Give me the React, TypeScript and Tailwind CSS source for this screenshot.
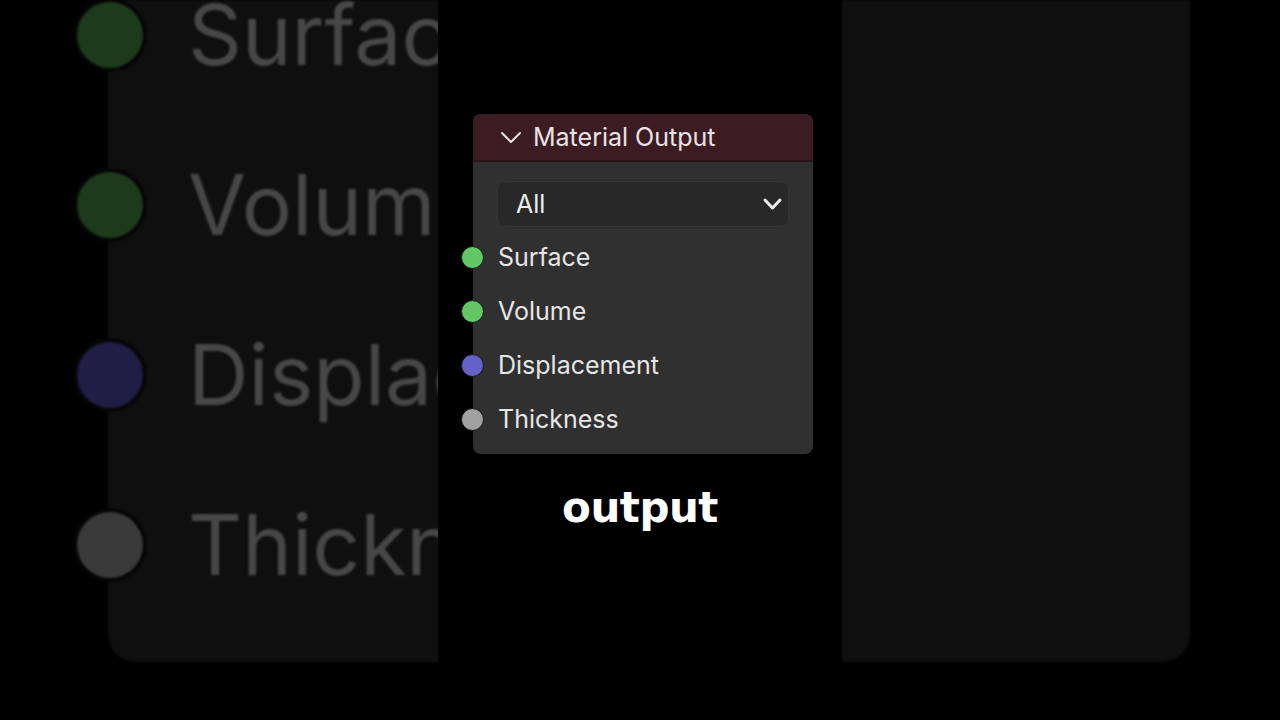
type Socket = { label: string; color: string; dim: string };

const sockets: Socket[] = [
  { label: "Surface", color: "bg-[#63c763]", dim: "bg-[#1d3a1d]" },
  { label: "Volume", color: "bg-[#63c763]", dim: "bg-[#1d3a1d]" },
  { label: "Displacement", color: "bg-[#6363c7]", dim: "bg-[#1f1e45]" },
  { label: "Thickness", color: "bg-[#a1a1a1]", dim: "bg-[#3a3a3a]" },
];

function Chevron({ w, h, stroke, className }: { w: number; h: number; stroke: number; className?: string }) {
  return (
    <svg width={w + stroke * 2} height={h + stroke * 2} viewBox={`0 0 ${w + stroke * 2} ${h + stroke * 2}`} className={className} fill="none">
      <polyline
        points={`${stroke},${stroke} ${stroke + w / 2},${stroke + h} ${stroke + w},${stroke}`}
        stroke="currentColor"
        strokeWidth={stroke}
        strokeLinecap="round"
        strokeLinejoin="round"
      />
    </svg>
  );
}

function BlurredLeft() {
  return (
    <div className="w-[438px] h-full overflow-hidden shrink-0">
      <div className="ml-[108px] w-[700px] h-[662px] bg-[#0f0f0f] rounded-bl-[28px] blur-[1px] flex flex-col">
        <div className="flex flex-col -mt-[50px]">
          {sockets.map((s) => (
            <div key={s.label} className="h-[170px] flex items-center">
              <div className={`w-[66px] h-[66px] rounded-full -ml-[31px] ${s.dim} ring-4 ring-[#050505] shrink-0`} />
              <span className="ml-[45px] text-[84px] leading-none text-[#474747] whitespace-nowrap font-['Inter',sans-serif]">
                {s.label}
              </span>
            </div>
          ))}
        </div>
      </div>
    </div>
  );
}

function BlurredRight() {
  return (
    <div className="w-[438px] h-full overflow-hidden shrink-0">
      <div className="mr-[90px] h-[662px] bg-[#0f0f0f] rounded-br-[28px] blur-[1px]" />
    </div>
  );
}

function MaterialOutputNode() {
  return (
    <div className="ml-[35px] w-[340px] rounded-[8px] bg-[#303030] font-['Inter',sans-serif]">
      <div className="h-[48px] bg-[#3c1c23] rounded-t-[8px] border-b-2 border-[#2b1519] flex items-center pl-[27px] gap-[11px] text-[#ebe3e3]">
        <Chevron w={18} h={9} stroke={2} />
        <span className="text-[25px] leading-none">Material Output</span>
      </div>
      <div className="pt-[19px] pb-[8px]">
        <div className="mx-[24px] h-[46px] rounded-[8px] bg-[#282828] border border-[#363636] flex items-center justify-between pl-[18px] pr-[5px] text-[#ececec]">
          <span className="text-[25px] leading-none">All</span>
          <Chevron w={15} h={8} stroke={3} />
        </div>
        <div className="mt-[3px] flex flex-col">
          {sockets.map((s) => (
            <div key={s.label} className="h-[54px] flex items-center">
              <div className={`w-[23px] h-[23px] rounded-full -ml-[12px] ${s.color} border-[1.5px] border-[#141414] shrink-0`} />
              <span className="ml-[14px] text-[25px] leading-none text-[#e6e6e6]">{s.label}</span>
            </div>
          ))}
        </div>
      </div>
    </div>
  );
}

export default function App() {
  return (
    <div className="w-full h-[720px] bg-black flex overflow-hidden">
      <BlurredLeft />
      <div className="w-[404px] h-full bg-black shrink-0 flex flex-col pt-[114px]">
        <MaterialOutputNode />
        <p className="mt-[33px] text-center text-white text-[42px] leading-none font-bold tracking-[-0.5px] font-['DejaVu_Sans',sans-serif]">
          output
        </p>
      </div>
      <BlurredRight />
    </div>
  );
}
